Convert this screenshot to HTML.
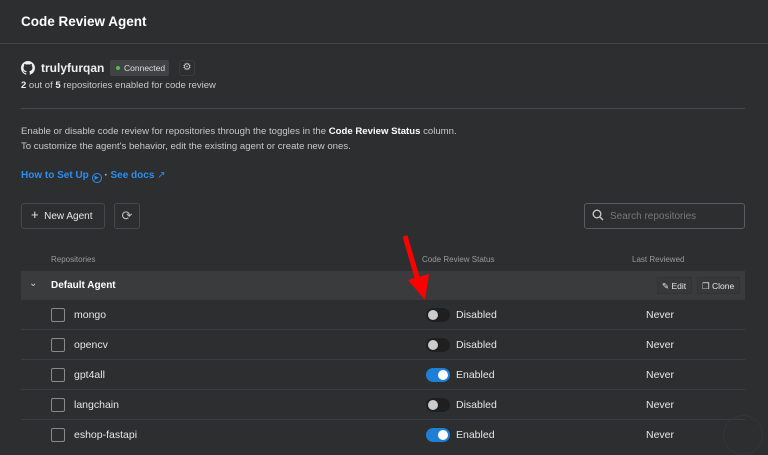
<!DOCTYPE html><html><head><style>
*{margin:0;padding:0;box-sizing:border-box}
body{width:768px;height:452px;background:#2d2e30;font-family:"Liberation Sans",sans-serif;color:#e6e6e6;position:relative;overflow:hidden;font-size:10px}
.a{position:absolute}
.hdr{left:0;top:0;width:768px;height:44px;border-bottom:1px solid #444}
.btn{border:1px solid #47484b;border-radius:3px}
.row{left:21px;width:724px;height:30px;border-bottom:1px solid #3c3d40}
.cb{left:30px;top:8px;width:14px;height:14px;border:1px solid #8a8a8a;border-radius:2px}
.nm{left:53px;top:9px;font-size:10.5px}
.tg{left:405px;top:8px;width:24px;height:14px;border-radius:7px;background:#1f1f20}
.tg i{position:absolute;left:2px;top:2px;width:10px;height:10px;border-radius:50%;background:#ccc}
.tg.on{background:#1e7fd6}.tg.on i{left:12px;background:#fff}
.st{left:435px;top:9px;font-size:10.5px}
.nv{left:625px;top:9px;font-size:10.5px}
</style></head><body>
<div class="a hdr"></div>
<div class="a" style="left:21px;top:14px;font-size:13.5px;font-weight:bold;color:#fff">Code Review Agent</div>
<svg class="a" style="left:21px;top:61px" width="14" height="14" viewBox="0 0 16 16"><path fill="#eee" d="M8 0C3.58 0 0 3.580 0 8c0 3.54 2.29 6.53 5.47 7.59.4.07.55-.17.55-.38v-1.330c-2.23.48-2.7-1.07-2.7-1.07-.36-.92-.89-1.17-.89-1.17-.73-.5.06-.49.06-.49.8.06 1.23.83 1.23.83.71 1.23 1.87.87 2.33.66.07-.52.28-.87.5-1.07-1.78-.2-3.64-.89-3.64-3.96 0-.87.31-1.59.82-2.15-.08-.2-.36-1.02.08-2.12 0 0 .67-.21 2.2.82A7.7 7.7 0 0 1 8 3.87c.68 0 1.36.09 2 .27 1.53-1.04 2.2-.82 2.2-.82.44 1.1.16 1.92.08 2.12.51.56.82 1.28.82 2.15 0 3.07-1.87 3.75-3.65 3.95.29.25.54.73.54 1.48v2.2c0 .21.15.46.55.38A8 8 0 0 0 16 8c0-4.42-3.58-8-8-8z"/></svg>
<div class="a" style="left:41px;top:61px;font-size:12px;font-weight:bold;color:#eee">trulyfurqan</div>
<div class="a" style="left:110px;top:60px;width:59px;height:16px;background:#414245;border-radius:2px;font-size:8.5px;color:#ddd;padding:3px 0 0 14px">Connected</div>
<div class="a" style="left:116px;top:66px;width:4px;height:4px;border-radius:50%;background:#4cc33a"></div>
<div class="a btn" style="left:179px;top:60px;width:16px;height:16px;border-color:#3a3b3d;color:#ccc;font-size:10px;text-align:center;line-height:14px">⚙</div>
<div class="a" style="left:21px;top:80px;font-size:9.5px;color:#c8c8c8"><b style="color:#eee">2</b> out of <b style="color:#eee">5</b> repositories enabled for code review</div>
<div class="a" style="left:21px;top:108px;width:724px;height:1px;background:#47484b"></div>
<div class="a" style="left:21px;top:126px;font-size:9.6px;color:#c8c8c8">Enable or disable code review for repositories through the toggles in the <b style="color:#fff">Code Review Status</b> column.</div>
<div class="a" style="left:21px;top:141px;font-size:9.6px;color:#c8c8c8">To customize the agent's behavior, edit the existing agent or create new ones.</div>
<div class="a" style="left:21px;top:170px;font-size:10px;font-weight:bold;color:#2b8ff0">How to Set Up <span style="display:inline-block;width:10px;height:10px;border:1.2px solid #2b8ff0;border-radius:50%;font-size:5px;text-align:center;line-height:8px;vertical-align:-1px">▶</span> <span style="color:#ccc">·</span> See docs <span style="font-weight:normal">↗</span></div>
<div class="a btn" style="left:21px;top:203px;width:84px;height:26px;font-size:10px;padding:6px 0 0 9px"><span style="font-size:13px;line-height:10px">+</span>&nbsp; New Agent</div>
<div class="a btn" style="left:114px;top:203px;width:26px;height:26px;text-align:center;color:#bbb;font-size:13px;line-height:24px">⟳</div>
<div class="a btn" style="left:584px;top:203px;width:161px;height:26px;border-color:#5a5b5e;font-size:10px;color:#777;padding:7px 0 0 25px">Search repositories</div>
<svg class="a" style="left:592px;top:209px" width="12" height="12" viewBox="0 0 12 12"><circle cx="5" cy="5" r="3.8" fill="none" stroke="#ccc" stroke-width="1.3"/><path d="M8 8l3 3" stroke="#ccc" stroke-width="1.3"/></svg>
<div class="a" style="left:51px;top:255px;font-size:8px;color:#9a9a9a">Repositories</div>
<div class="a" style="left:422px;top:255px;font-size:8px;color:#9a9a9a">Code Review Status</div>
<div class="a" style="left:632px;top:255px;font-size:8px;color:#9a9a9a">Last Reviewed</div>
<div class="a" style="left:21px;top:271px;width:724px;height:29px;background:#3a3b3d"></div>
<div class="a" style="left:29px;top:278px;font-size:10px;color:#ccc">⌄</div>
<div class="a" style="left:51px;top:280px;font-size:10px;font-weight:bold;color:#fff">Default Agent</div>
<div class="a" style="left:657px;top:277px;width:35px;height:17px;background:#37383a;border:1px solid #333;font-size:8.5px;padding:3px 0 0 4px">✎ Edit</div>
<div class="a" style="left:697px;top:277px;width:43px;height:17px;background:#37383a;border:1px solid #333;font-size:8.5px;padding:3px 0 0 4px">❐ Clone</div>
<div class="a row" style="top:300px"><div class="a cb"></div><div class="a nm">mongo</div><div class="a tg"><i></i></div><div class="a st">Disabled</div><div class="a nv">Never</div></div>
<div class="a row" style="top:330px"><div class="a cb"></div><div class="a nm">opencv</div><div class="a tg"><i></i></div><div class="a st">Disabled</div><div class="a nv">Never</div></div>
<div class="a row" style="top:360px"><div class="a cb"></div><div class="a nm">gpt4all</div><div class="a tg on"><i></i></div><div class="a st">Enabled</div><div class="a nv">Never</div></div>
<div class="a row" style="top:390px"><div class="a cb"></div><div class="a nm">langchain</div><div class="a tg"><i></i></div><div class="a st">Disabled</div><div class="a nv">Never</div></div>
<div class="a row" style="top:420px;border:none"><div class="a cb"></div><div class="a nm">eshop-fastapi</div><div class="a tg on"><i></i></div><div class="a st">Enabled</div><div class="a nv">Never</div></div>
<div class="a" style="left:723px;top:415px;width:40px;height:40px;border-radius:50%;border:1px solid #343538"></div>
<svg class="a" style="left:395px;top:232px" width="40" height="72"><path d="M10 4 L24 52" stroke="#f00" stroke-width="5"/><path d="M13 48 L30 68 L34 42 Z" fill="#f00"/></svg>
</body></html>
